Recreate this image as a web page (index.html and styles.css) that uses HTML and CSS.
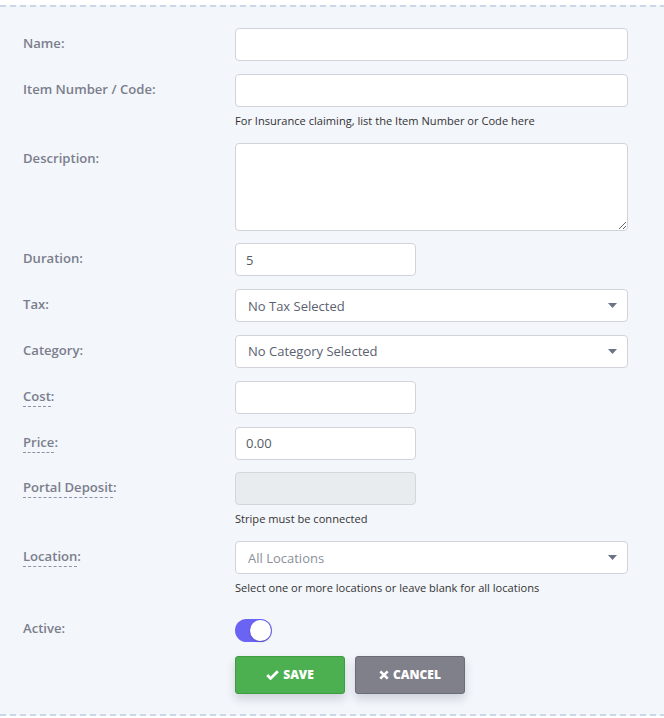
FILE: index.html
```html
<!DOCTYPE html>
<html lang="en">
<head>
<meta charset="utf-8">
<title>Item</title>
<link rel="stylesheet" href="styles.css">
</head>
<body>
<form class="panel">
  <div class="row">
    <label class="label">Name:</label>
    <div class="control"><input class="input" type="text"></div>
  </div>
  <div class="row">
    <label class="label">Item Number / Code:</label>
    <div class="control">
      <input class="input" type="text">
      <div class="help">For Insurance claiming, list the Item Number or Code here</div>
    </div>
  </div>
  <div class="row">
    <label class="label">Description:</label>
    <div class="control"><textarea class="input textarea"></textarea></div>
  </div>
  <div class="row">
    <label class="label">Duration:</label>
    <div class="control"><input class="input short" type="text" value="5"></div>
  </div>
  <div class="row">
    <label class="label">Tax:</label>
    <div class="control">
      <div class="input select"><span>No Tax Selected</span><svg class="caret" width="9" height="5" viewBox="0 0 9 5"><path d="M0 0H9L4.5 5Z"/></svg></div>
    </div>
  </div>
  <div class="row">
    <label class="label">Category:</label>
    <div class="control">
      <div class="input select"><span>No Category Selected</span><svg class="caret" width="9" height="5" viewBox="0 0 9 5"><path d="M0 0H9L4.5 5Z"/></svg></div>
    </div>
  </div>
  <div class="row">
    <label class="label"><span class="tip">Cost</span>:</label>
    <div class="control"><input class="input short" type="text"></div>
  </div>
  <div class="row">
    <label class="label"><span class="tip">Price</span>:</label>
    <div class="control"><input class="input short" type="text" value="0.00"></div>
  </div>
  <div class="row">
    <label class="label"><span class="tip">Portal Deposit</span>:</label>
    <div class="control">
      <input class="input short" type="text" disabled>
      <div class="help">Stripe must be connected</div>
    </div>
  </div>
  <div class="row">
    <label class="label"><span class="tip">Location</span>:</label>
    <div class="control">
      <div class="input select placeholder"><span>All Locations</span><svg class="caret" width="9" height="5" viewBox="0 0 9 5"><path d="M0 0H9L4.5 5Z"/></svg></div>
      <div class="help">Select one or more locations or leave blank for all locations</div>
    </div>
  </div>
  <div class="row active-row">
    <label class="label">Active:</label>
    <div class="control">
      <span class="toggle"><span class="knob"></span></span>
    </div>
  </div>
  <div class="row buttons-row">
    <span></span>
    <div class="control buttons">
      <button type="button" class="btn btn-save"><svg width="13" height="10" viewBox="0 0 13 10"><path d="M1.2 5L4.6 8.4L11.8 1.2" fill="none" stroke="#fff" stroke-width="2.8"/></svg>SAVE</button>
      <button type="button" class="btn btn-cancel"><svg width="10" height="10" viewBox="0 0 10 10"><path d="M1.3 1.3L8.7 8.7M8.7 1.3L1.3 8.7" fill="none" stroke="#fff" stroke-width="2.6"/></svg>CANCEL</button>
    </div>
  </div>
</form>
</body>
</html>
```

FILE: styles.css
```css
* { box-sizing: border-box; }

html, body {
  margin: 0;
  padding: 0;
  background: #ffffff;
}

body {
  font-family: "Open Sans", "Noto Sans", "Liberation Sans", sans-serif;
  font-size: 13px;
  color: #333;
}

.panel {
  margin-top: 5px;
  padding: 23px 0 22px 23px;
  background:
    linear-gradient(to right, #cbd6e6 65%, transparent 65%) left top / 10px 2px repeat-x,
    linear-gradient(to right, #cbd6e6 65%, transparent 65%) left bottom / 10px 2px repeat-x,
    #f3f6fb;
  height: 711px;
}

.row {
  display: grid;
  grid-template-columns: 212px 393px;
  margin-bottom: 12.8px;
}

.label {
  padding-top: 6px;
  line-height: 18px;
  font-size: 13.1px;
  font-weight: 600;
  color: #7b7e8c;
}

.tip {
  border-bottom: 1px dashed #8f93a3;
  padding-bottom: 1px;
}

.control {
  display: flex;
  flex-direction: column;
  align-items: flex-start;
}

.input {
  width: 393px;
  height: 33px;
  border: 1px solid #d0d3da;
  border-radius: 4px;
  background: #fff;
  padding: 0 10px;
  font-family: "Open Sans", "Noto Sans", "Liberation Sans", sans-serif;
  font-size: 13px;
  color: #555b66;
  outline: none;
  margin: 0;
}

.input.short { width: 181px; }

.input:disabled {
  background: #e9ecef;
  border-color: #d3d6db;
}

.textarea {
  height: 88px;
  resize: vertical;
  padding: 6px 10px;
  display: block;
}

.select {
  display: flex;
  align-items: center;
  justify-content: space-between;
  padding: 0 10px 0 12px;
  color: #5a6170;
}

.select.placeholder { color: #8b909a; }

.caret { fill: #6b7386; display: block; }

.help {
  margin-top: 5px;
  line-height: 18px;
  font-size: 11.1px;
  color: #333;
}

.active-row { padding-top: 3px; margin-bottom: 14px; }

.toggle {
  margin-top: 6px;
  width: 37px;
  height: 23px;
  border-radius: 12px;
  background: #6b63f4;
  display: flex;
  align-items: center;
  justify-content: flex-end;
  padding-right: 1px;
}

.knob {
  width: 21px;
  height: 21px;
  border-radius: 50%;
  background: #fff;
  box-shadow: 0 1px 2px rgba(0, 0, 0, 0.25);
}

.buttons-row { margin-bottom: 0; }

.buttons {
  flex-direction: row;
  gap: 10px;
}

.btn {
  width: 110px;
  height: 38px;
  border-radius: 3px;
  display: flex;
  align-items: center;
  justify-content: center;
  gap: 4px;
  font-family: "Open Sans", "Noto Sans", "Liberation Sans", sans-serif;
  font-size: 12px;
  font-weight: 800;
  color: #fff;
  padding: 0;
  cursor: pointer;
  box-shadow: 0 5px 10px rgba(40, 50, 70, 0.18);
}

.btn-save {
  background: #4caf50;
  border: 1px solid #3f9c43;
}

.btn-cancel {
  background: #80808a;
  border: 1px solid #6c6c75;
}
```
